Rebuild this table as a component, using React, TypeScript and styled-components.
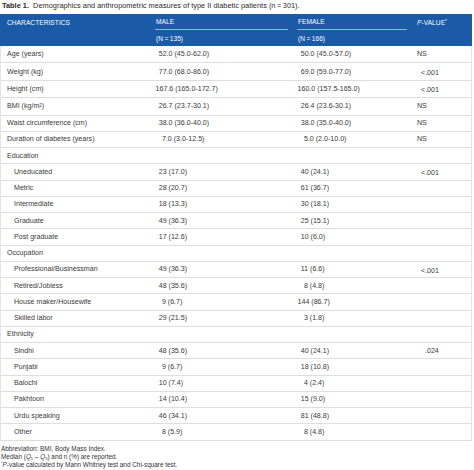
import React, {FC, ReactNode} from 'react';
import styled, {createGlobalStyle} from 'styled-components';

const GlobalStyle = createGlobalStyle`
  * {
    box-sizing: border-box;
  }

  body {
    margin: 0;
    background: #FFFFFF;
    font-family: "Liberation Sans", Arial, Helvetica, sans-serif;
    color: #3a3a3a;
  }
`;

interface Row {
    label: ReactNode;
    male?: string;
    female?: string;
    p?: string;
    sub?: boolean;
    tall?: boolean;
}

const rows: Row[] = [
    {label: 'Age (years)', male: '52.0 (45.0-62.0)', female: '50.0 (45.0-57.0)', p: 'NS', tall: true},
    {label: 'Weight (kg)', male: '77.0 (68.0-86.0)', female: '69.0 (59.0-77.0)', p: '<.001', tall: true},
    {label: 'Height (cm)', male: '167.6 (165.0-172.7)', female: '160.0 (157.5-165.0)', p: '<.001', tall: true},
    {label: <>BMI (kg/m<sup>2</sup>)</>, male: '26.7 (23.7-30.1)', female: '26.4 (23.6-30.1)', p: 'NS', tall: true},
    {label: 'Waist circumference (cm)', male: '38.0 (36.0-40.0)', female: '38.0 (35.0-40.0)', p: 'NS'},
    {label: 'Duration of diabetes (years)', male: '7.0 (3.0-12.5)', female: '5.0 (2.0-10.0)', p: 'NS'},
    {label: 'Education'},
    {label: 'Uneducated', sub: true, male: '23 (17.0)', female: '40 (24.1)', p: '<.001'},
    {label: 'Metric', sub: true, male: '28 (20.7)', female: '61 (36.7)'},
    {label: 'Intermediate', sub: true, male: '18 (13.3)', female: '30 (18.1)'},
    {label: 'Graduate', sub: true, male: '49 (36.3)', female: '25 (15.1)'},
    {label: 'Post graduate', sub: true, male: '17 (12.6)', female: '10 (6.0)'},
    {label: 'Occupation'},
    {label: 'Professional/Businessman', sub: true, male: '49 (36.3)', female: '11 (6.6)', p: '<.001'},
    {label: 'Retired/Jobless', sub: true, male: '48 (35.6)', female: '8 (4.8)'},
    {label: 'House maker/Housewife', sub: true, male: '9 (6.7)', female: '144 (86.7)'},
    {label: 'Skilled labor', sub: true, male: '29 (21.5)', female: '3 (1.8)'},
    {label: 'Ethnicity'},
    {label: 'Sindhi', sub: true, male: '48 (35.6)', female: '40 (24.1)', p: '.024'},
    {label: 'Punjabi', sub: true, male: '9 (6.7)', female: '18 (10.8)'},
    {label: 'Balochi', sub: true, male: '10 (7.4)', female: '4 (2.4)'},
    {label: 'Pakhtoon', sub: true, male: '14 (10.4)', female: '15 (9.0)'},
    {label: 'Urdu speaking', sub: true, male: '46 (34.1)', female: '81 (48.8)'},
    {label: 'Other', sub: true, male: '8 (5.9)', female: '8 (4.8)'},
];

// number of digits before the decimal / bracket, used to line the values up
const leadDigits = (v?: string): number => {
    if (!v) return 3;
    const m = v.match(/^\d+/);
    return m ? m[0].length : 3;
};

const pIndent = (p?: string): number => {
    if (!p) return 0;
    if (p.startsWith('<')) return 4;
    if (p.startsWith('.')) return 8;
    return 0;
};

const App: FC = (): JSX.Element => {
    return (
        <>
            <GlobalStyle/>
            <Page>
                <Caption>
                    <strong>Table 1.</strong>&nbsp; Demographics and anthropometric measures of type II diabetic
                    patients (n{'\u2009'}={'\u2009'}301).
                </Caption>
                <Table>
                    <Head>
                        <HeadRow>
                            <HeadCell>CHARACTERISTICS</HeadCell>
                            <HeadCell $rule $gap={9}>MALE</HeadCell>
                            <HeadCell $rule $gap={10}>FEMALE</HeadCell>
                            <HeadCell><i>P</i>-VALUE<sup>*</sup></HeadCell>
                        </HeadRow>
                        <HeadRow>
                            <HeadCell/>
                            <HeadCell>(N{'\u2009'}={'\u2009'}135)</HeadCell>
                            <HeadCell>(N{'\u2009'}={'\u2009'}166)</HeadCell>
                            <HeadCell/>
                        </HeadRow>
                    </Head>
                    {rows.map((r, i) => (
                        <DataRow key={i} $tall={r.tall}>
                            <Label $sub={r.sub}>{r.label}</Label>
                            <Value $lead={leadDigits(r.male)}>{r.male}</Value>
                            <Value $lead={leadDigits(r.female)}>{r.female}</Value>
                            <PValue $indent={pIndent(r.p)} $low={r.p?.startsWith('<')}>{r.p}</PValue>
                        </DataRow>
                    ))}
                </Table>
                <Notes>
                    <div>Abbreviation: BMI, Body Mass Index.</div>
                    <div>Median (<i>Q</i><sub>1</sub> – <i>Q</i><sub>3</sub>) and n (%) are reported.</div>
                    <div><sup>*</sup><i>P</i>-value calculated by Mann Whitney test and Chi-square test.</div>
                </Notes>
            </Page>
        </>
    );
};

export default App;

const Page = styled.div`
  width: 474px;
  height: 470px;
  overflow: hidden;
`;

const Caption = styled.div`
  height: 14px;
  padding: 1px 0 0 2px;
  font-size: 7.4px;
  line-height: 9px;
  color: #2b2b2b;
  white-space: nowrap;

  strong {
    font-weight: 700;
  }
`;

const Table = styled.div`
  width: 472px;
  border-left: 1px solid #e4e4e4;
  border-right: 1px solid #e4e4e4;
`;

const Head = styled.div`
  background: #1b5aa6;
  color: #FFFFFF;
  margin: 0 -1px;
`;

const grid = `
  display: grid;
  grid-template-columns: 154px 142px 120px 1fr;
`;

const HeadRow = styled.div`
  ${grid};
  height: 16px;
  padding-left: 1px;
`;

const HeadCell = styled.div<{ $rule?: boolean; $gap?: number }>`
  display: flex;
  align-items: center;
  padding-left: 6px;
  font-size: 6.6px;
  letter-spacing: 0.05px;
  margin-right: ${p => p.$gap || 0}px;
  border-bottom: ${p => (p.$rule ? '1px solid rgba(255, 255, 255, 0.55)' : 'none')};

  &:nth-child(2), &:nth-child(3) {
    padding-left: 1px;
  }

  &:last-child {
    padding-left: 0;
  }

  sup {
    font-size: 4.5px;
    line-height: 0;
    vertical-align: 3px;
  }
`;

const DataRow = styled.div<{ $tall?: boolean }>`
  ${grid};
  height: ${p => (p.$tall ? 17.4 : 16.25)}px;
  border-bottom: 1px solid #dedede;
  font-size: 7.1px;
`;

const Label = styled.div<{ $sub?: boolean }>`
  display: flex;
  align-items: center;
  padding-left: ${p => (p.$sub ? 13 : 6)}px;
  white-space: nowrap;

  sup {
    font-size: 4.5px;
    line-height: 0;
    vertical-align: 3px;
  }
`;

const Value = styled.div<{ $lead: number }>`
  display: flex;
  align-items: center;
  padding-left: ${p => 0.5 + (3 - p.$lead) * 3.2}px;
  white-space: nowrap;
`;

const PValue = styled.div<{ $indent: number; $low?: boolean }>`
  display: flex;
  align-items: center;
  padding-left: ${p => p.$indent}px;
  padding-top: ${p => (p.$low ? 3 : 0)}px;
`;

const Notes = styled.div`
  padding: 4px 0 0 1px;
  font-size: 6.4px;
  line-height: 8.2px;
  color: #333333;

  sub {
    font-size: 4px;
    line-height: 0;
    vertical-align: -1px;
  }

  sup {
    font-size: 4px;
    line-height: 0;
    vertical-align: 2px;
  }
`;
